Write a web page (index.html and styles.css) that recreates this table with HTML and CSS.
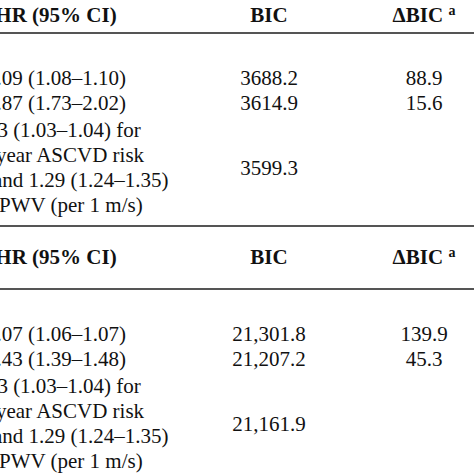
FILE: index.html
```html
<!DOCTYPE html>
<html lang="en">
<head>
<meta charset="utf-8">
<title>Model comparison</title>
<link rel="stylesheet" href="styles.css">
</head>
<body>
<div class="viewport">
  <table class="results">
    <colgroup>
      <col class="c-hr">
      <col class="c-bic">
      <col class="c-dbic">
    </colgroup>
    <tbody class="sec sec-top">
      <tr class="head">
        <th>HR (95% CI)</th>
        <th>BIC</th>
        <th>ΔBIC <sup>a</sup></th>
      </tr>
      <tr class="first">
        <td>1.09 (1.08–1.10)</td>
        <td>3688.2</td>
        <td>88.9</td>
      </tr>
      <tr>
        <td>1.87 (1.73–2.02)</td>
        <td>3614.9</td>
        <td>15.6</td>
      </tr>
      <tr class="last">
        <td>1.03 (1.03–1.04) for<br>10-year ASCVD risk<br>score and 1.29 (1.24–1.35)<br>for PWV (per 1 m/s)</td>
        <td>3599.3</td>
        <td></td>
      </tr>
    </tbody>
    <tbody class="sec">
      <tr class="head">
        <th>HR (95% CI)</th>
        <th>BIC</th>
        <th>ΔBIC <sup>a</sup></th>
      </tr>
      <tr class="first">
        <td>1.07 (1.06–1.07)</td>
        <td>21,301.8</td>
        <td>139.9</td>
      </tr>
      <tr>
        <td>1.43 (1.39–1.48)</td>
        <td>21,207.2</td>
        <td>45.3</td>
      </tr>
      <tr class="last">
        <td>1.03 (1.03–1.04) for<br>10-year ASCVD risk<br>score and 1.29 (1.24–1.35)<br>for PWV (per 1 m/s)</td>
        <td>21,161.9</td>
        <td></td>
      </tr>
    </tbody>
  </table>
</div>
</body>
</html>
```
FILE: styles.css
```css
html, body {
  margin: 0;
  padding: 0;
  background: #ffffff;
}

.viewport {
  width: 474px;
  height: 474px;
  overflow: hidden;
}

.results {
  margin-left: -60px;
  width: 542px;
  table-layout: fixed;
  border-collapse: separate;
  border-spacing: 0;
  font-family: "Liberation Serif", "Times New Roman", serif;
  font-size: 21px;
  line-height: 25px;
  color: #111111;
}

.c-hr { width: 232px; }
.c-bic { width: 194px; }
.c-dbic { width: 116px; }

.results th,
.results td {
  padding: 0;
  text-align: center;
  vertical-align: middle;
  white-space: nowrap;
}

.results th {
  font-weight: bold;
}

.results sup {
  font-size: 14px;
  line-height: 0;
  vertical-align: 7px;
}

.head th {
  padding-top: 18px;
  padding-bottom: 18px;
  border-bottom: 2px solid #555;
}

.sec-top .head th {
  padding-top: 3px;
  padding-bottom: 4px;
}

.first td {
  padding-top: 32px;
}

.last td {
  padding-top: 2px;
  padding-bottom: 7px;
  border-bottom: 2px solid #555;
}
```
